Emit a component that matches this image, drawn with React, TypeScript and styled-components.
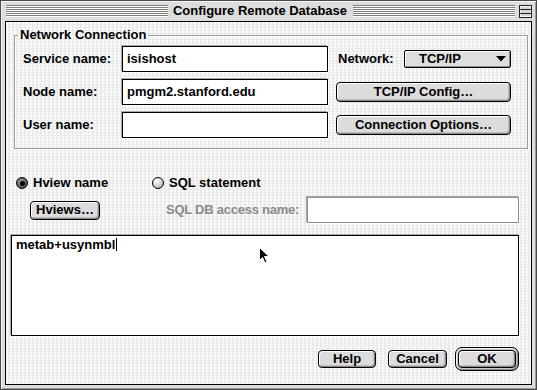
import React from 'react';
import styled, { createGlobalStyle } from 'styled-components';

const Global = createGlobalStyle`
  html, body { margin: 0; padding: 0; background: #ffffff; }
  body { font-family: "Liberation Sans", Arial, sans-serif; }
  * { box-sizing: border-box; }
`;

const Window = styled.div`
  position: relative;
  width: 537px;
  height: 390px;
  border: 1px solid #4a4a4a;
  background: #dddddd;
  display: flex;
  flex-direction: column;
  padding: 0 4px 4px 4px;
  box-shadow: inset 1px 1px 0 #f6f6f6, inset -1px -1px 0 #9a9a9a;
  font: bold 13px "Liberation Sans", Arial, sans-serif;
  color: #000;
`;

const TitleBar = styled.div`
  height: 20px;
  display: flex;
  align-items: center;
  flex-shrink: 0;
`;

const Stripes = styled.div`
  flex: 1;
  height: 12px;
  margin-left: 1px;
  background: repeating-linear-gradient(to bottom, #7c7c7c 0 1px, #ffffff 1px 2px);
`;

const Title = styled.div`
  padding: 0 5px;
  font-size: 13px;
  line-height: 14px;
  white-space: nowrap;
`;

const ShadeBox = styled.svg`
  margin-left: 4px;
  flex-shrink: 0;
`;

const Content = styled.div`
  position: relative;
  flex: 1;
  border: 1px solid #000;
  background-color: #ebebeb;
  background-image: radial-gradient(circle at 1px 1px, #fdfdfd 0.7px, transparent 1px);
  background-size: 4px 3px;
  display: flex;
  flex-direction: column;
`;

const Group = styled.fieldset`
  margin: 6px 3px 0 8px;
  padding: 0;
  min-width: 0;
  border: 1px solid #9c9c9c;
  box-shadow: inset 1px 1px 0 #ffffff, 1px 1px 0 #ffffff;
`;

const Legend = styled.legend`
  margin-left: 3px;
  padding: 0 2px;
  line-height: 14px;
`;

const FieldGrid = styled.div`
  margin: 4px 0 10px 8px;
  display: grid;
  grid-template-columns: 91px 206px 175px;
  grid-auto-rows: 26px;
  column-gap: 8px;
  row-gap: 7px;
  align-items: center;
`;

const Label = styled.span<{ $disabled?: boolean }>`
  white-space: nowrap;
  line-height: 14px;
  color: ${(p) => (p.$disabled ? '#8a8a8a' : '#000')};
`;

const TextField = styled.div<{ $disabled?: boolean; $w?: number }>`
  height: 26px;
  width: ${(p) => (p.$w ? `${p.$w}px` : 'auto')};
  background: #fff;
  border: 1px solid ${(p) => (p.$disabled ? '#8e8e8e' : '#000')};
  box-shadow: -1px -1px 0 #a8a8a8, 1px 1px 0 #ffffff;
  padding: 0 4px;
  display: flex;
  align-items: center;
  line-height: 14px;
  white-space: nowrap;
  overflow: hidden;
`;

const NetRow = styled.div`
  display: flex;
  align-items: center;
  padding-left: 2px;
`;

const Popup = styled.div`
  margin-left: auto;
  width: 107px;
  height: 18px;
  border: 1px solid #000;
  border-radius: 2px;
  background: #dedede;
  box-shadow: inset 1px 1px 0 #ffffff, inset -1px -1px 0 #8e8e8e;
  display: flex;
  align-items: center;
  padding: 0 4px 0 14px;
  line-height: 14px;
  justify-content: space-between;
`;

const Button = styled.div<{ $w?: number; $h?: number }>`
  width: ${(p) => (p.$w ? `${p.$w}px` : '100%')};
  height: ${(p) => p.$h ?? 20}px;
  border: 1px solid #000;
  border-radius: 4px;
  background: #dcdcdc;
  box-shadow: inset 1px 1px 0 #ffffff, inset -1px -1px 0 #8a8a8a, inset -2px -2px 0 #bdbdbd;
  display: flex;
  align-items: center;
  justify-content: center;
  line-height: 14px;
  white-space: nowrap;
  flex-shrink: 0;
`;

const DefaultRing = styled.div`
  border: 1px solid #000;
  border-radius: 7px;
  padding: 2px;
  background: #c9c9c9;
  box-shadow: inset 1px 1px 0 #f2f2f2, inset -1px -1px 0 #888;
  margin-left: 8px;
`;

const RadioRow = styled.div`
  margin: 26px 0 0 10px;
  height: 16px;
  display: flex;
  align-items: center;
`;

const RadioItem = styled.div<{ $w?: number }>`
  display: flex;
  align-items: center;
  gap: 5px;
  width: ${(p) => (p.$w ? `${p.$w}px` : 'auto')};
  line-height: 14px;
`;

const RadioDot = styled.span<{ $on?: boolean }>`
  width: 12px;
  height: 12px;
  border-radius: 50%;
  border: 1px solid #000;
  flex-shrink: 0;
  position: relative;
  background: ${(p) =>
    p.$on
      ? 'radial-gradient(circle at 40% 35%, #9a9a9a 0, #555 70%)'
      : 'radial-gradient(circle at 35% 30%, #ffffff 0, #d8d8d8 45%, #9a9a9a 100%)'};
  &::after {
    content: '';
    display: ${(p) => (p.$on ? 'block' : 'none')};
    position: absolute;
    left: 2.5px;
    top: 2.5px;
    width: 5px;
    height: 5px;
    border-radius: 50%;
    background: #000;
  }
`;

const HviewRow = styled.div`
  margin: 6px 12px 0 24px;
  height: 26px;
  display: flex;
  align-items: center;
`;

const SqlLabel = styled(Label)`
  margin-left: 66px;
  letter-spacing: -0.25px;
`;

const SqlField = styled(TextField)`
  margin-left: auto;
`;

const TextArea = styled.div`
  margin: 12px 12px 0 5px;
  height: 101px;
  background: #fff;
  border: 1px solid #000;
  box-shadow: -1px -1px 0 #a8a8a8, 1px 1px 0 #ffffff;
  padding: 1px 4px;
  line-height: 16px;
`;

const Caret = styled.span`
  display: inline-block;
  width: 1px;
  height: 13px;
  background: #000;
  vertical-align: -2px;
  margin-left: 1px;
`;

const ButtonRow = styled.div`
  margin: 11px 12px 0 0;
  display: flex;
  justify-content: flex-end;
  align-items: center;
`;

const Spacer = styled.div<{ $w: number }>`
  width: ${(p) => p.$w}px;
  flex-shrink: 0;
`;

const Cursor = styled.svg`
  position: absolute;
  left: 253px;
  top: 225px;
`;

export default function App() {
  return (
    <>
      <Global />
      <Window>
        <TitleBar>
          <Stripes />
          <Title>Configure Remote Database</Title>
          <Stripes />
          <ShadeBox width="13" height="13" viewBox="0 0 13 13">
            <rect x="0.5" y="0.5" width="12" height="12" fill="#d4d4d4" stroke="#222" />
            <rect x="1.5" y="1.5" width="10" height="10" fill="none" stroke="#f5f5f5" />
            <line x1="1" y1="4.5" x2="12" y2="4.5" stroke="#222" />
            <line x1="1" y1="8.5" x2="12" y2="8.5" stroke="#222" />
          </ShadeBox>
        </TitleBar>
        <Content>
          <Group>
            <Legend>Network Connection</Legend>
            <FieldGrid>
              <Label>Service name:</Label>
              <TextField>isishost</TextField>
              <NetRow>
                <Label>Network:</Label>
                <Popup>
                  <span>TCP/IP</span>
                  <svg width="10" height="6" viewBox="0 0 10 6">
                    <polygon points="0,0 10,0 5,5.5" fill="#000" />
                  </svg>
                </Popup>
              </NetRow>
              <Label>Node name:</Label>
              <TextField>pmgm2.stanford.edu</TextField>
              <Button>TCP/IP Config…</Button>
              <Label>User name:</Label>
              <TextField />
              <Button>Connection Options…</Button>
            </FieldGrid>
          </Group>
          <RadioRow>
            <RadioItem $w={136}>
              <RadioDot $on />
              <span>Hview name</span>
            </RadioItem>
            <RadioItem>
              <RadioDot />
              <span>SQL statement</span>
            </RadioItem>
          </RadioRow>
          <HviewRow>
            <Button $w={70} $h={19}>Hviews…</Button>
            <SqlLabel $disabled>SQL DB access name:</SqlLabel>
            <SqlField $disabled $w={212} />
          </HviewRow>
          <TextArea>
            metab+usynmbl<Caret />
          </TextArea>
          <ButtonRow>
            <Button $w={58} $h={18}>Help</Button>
            <Spacer $w={12} />
            <Button $w={59} $h={18}>Cancel</Button>
            <DefaultRing>
              <Button $w={58} $h={18}>OK</Button>
            </DefaultRing>
          </ButtonRow>
          <Cursor width="11" height="17" viewBox="0 0 11 17">
            <path d="M0.5 0.5 L0.5 13.5 L3.5 10.5 L6 16 L8 15 L5.5 9.5 L10 9.5 Z" fill="#000" stroke="#fff" strokeWidth="1" />
          </Cursor>
        </Content>
      </Window>
    </>
  );
}
